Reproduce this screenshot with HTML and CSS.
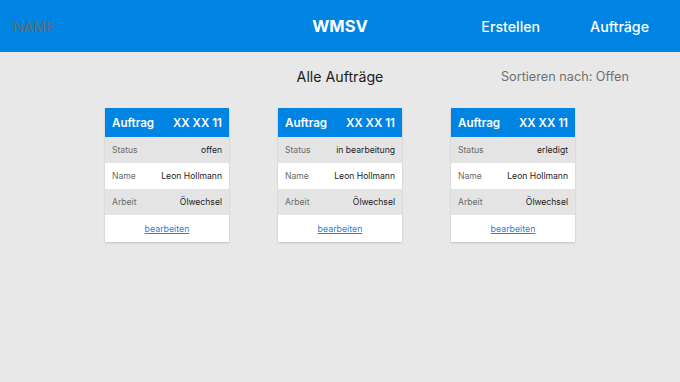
FILE: index.html
```html
<!DOCTYPE html>
<html>
<head>
    <meta name="viewport" content="width=device-width, initial-scale=1">
    <link rel="stylesheet" href="styles.css">
</head>

<body>
    <header id="top-bar">
        <span class="brand-name">NAME</span>
        <span class="app-title">WMSV</span>
        <nav class="nav-links">
            <a href="#">Erstellen</a>
            <a href="#">Aufträge</a>
        </nav>
    </header>

    <div id="toolbar">
        <h2>Alle Aufträge</h2>
        <span class="sort-label">Sortieren nach: Offen</span>
    </div>

    <div id="order-list">
        <div class="order-card">
            <div class="order-head"><span>Auftrag</span><span>XX XX 11</span></div>
            <div class="order-row shaded"><span class="label">Status</span><span>offen</span></div>
            <div class="order-row"><span class="label">Name</span><span>Leon Hollmann</span></div>
            <div class="order-row shaded"><span class="label">Arbeit</span><span>Ölwechsel</span></div>
            <div class="order-foot"><a href="#">bearbeiten</a></div>
        </div>
        <div class="order-card">
            <div class="order-head"><span>Auftrag</span><span>XX XX 11</span></div>
            <div class="order-row shaded"><span class="label">Status</span><span>in bearbeitung</span></div>
            <div class="order-row"><span class="label">Name</span><span>Leon Hollmann</span></div>
            <div class="order-row shaded"><span class="label">Arbeit</span><span>Ölwechsel</span></div>
            <div class="order-foot"><a href="#">bearbeiten</a></div>
        </div>
        <div class="order-card">
            <div class="order-head"><span>Auftrag</span><span>XX XX 11</span></div>
            <div class="order-row shaded"><span class="label">Status</span><span>erledigt</span></div>
            <div class="order-row"><span class="label">Name</span><span>Leon Hollmann</span></div>
            <div class="order-row shaded"><span class="label">Arbeit</span><span>Ölwechsel</span></div>
            <div class="order-foot"><a href="#">bearbeiten</a></div>
        </div>
    </div>
</body>
</html>
```

FILE: styles.css
```css
* {
    box-sizing: border-box;
    font-family: 'Inter', 'Noto Sans', sans-serif;
}

body {
    margin: 0;
    background-color: #e8e8e8;
    color: #222;
    min-height: 100vh;
}

#top-bar {
    display: grid;
    grid-template-columns: 1fr auto 1fr;
    align-items: center;
    height: 52px;
    padding: 0 13px;
    background-color: #0084e3;
}

.brand-name {
    font-size: 14px;
    color: #6a6a6a;
}

.app-title {
    font-size: 16.5px;
    font-weight: 700;
    color: #fff;
}

.nav-links {
    display: flex;
    justify-content: flex-end;
    gap: 50px;
    padding-right: 18px;
}

.nav-links a {
    color: #fff;
    text-decoration: none;
    font-size: 14.2px;
    font-weight: 500;
}

#toolbar {
    display: grid;
    grid-template-columns: 1fr auto 1fr;
    align-items: center;
    height: 48px;
    padding: 0 13px;
}

#toolbar h2 {
    grid-column: 2;
    margin: 0;
    font-size: 14.2px;
    font-weight: 400;
    color: #1c1c1c;
}

.sort-label {
    justify-self: end;
    margin-right: 38px;
    font-size: 12.7px;
    color: #707070;
}

#order-list {
    display: flex;
    justify-content: center;
    gap: 49px;
    padding-top: 8px;
}

.order-card {
    width: 124px;
    box-shadow: 0 1px 2px rgba(0,0,0,0.18);
}

.order-head {
    display: flex;
    justify-content: space-between;
    align-items: center;
    height: 29px;
    padding: 0 7px;
    background-color: #0084e3;
    color: #fff;
    font-size: 11.6px;
    font-weight: 600;
}

.order-row {
    display: flex;
    justify-content: space-between;
    align-items: center;
    height: 26px;
    padding: 0 7px;
    background-color: #fff;
    font-size: 8.6px;
    color: #222;
}

.order-row.shaded {
    background-color: #e4e4e4;
}

.order-row .label {
    color: #6a6a6a;
}

.order-foot {
    display: flex;
    justify-content: center;
    align-items: center;
    height: 27px;
    background-color: #fff;
}

.order-foot a {
    font-size: 8.8px;
    color: #2a7fe0;
}
```
